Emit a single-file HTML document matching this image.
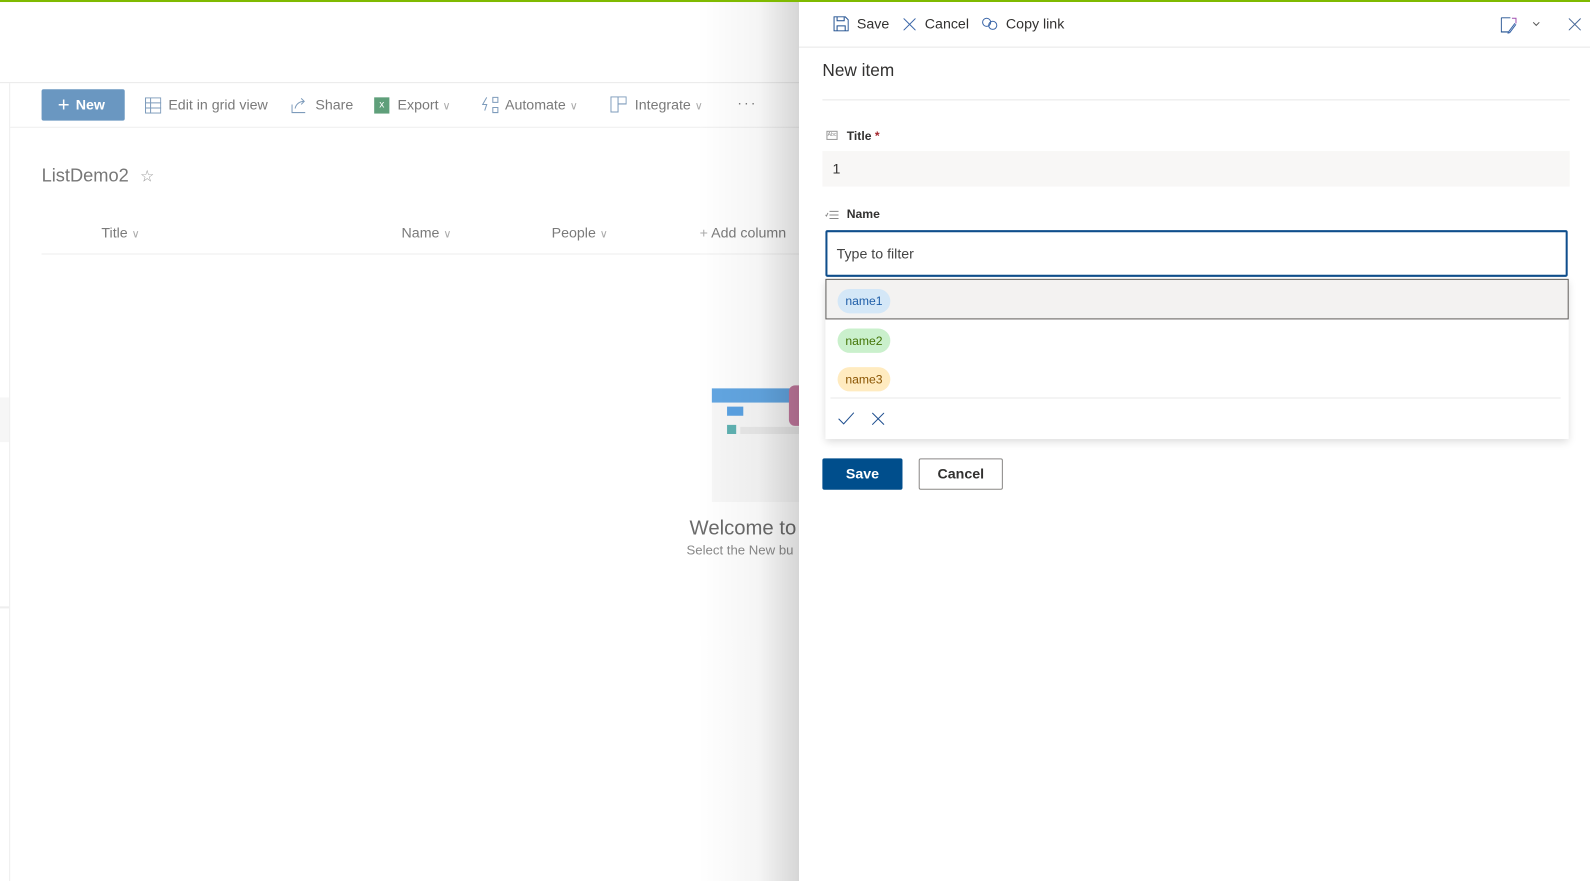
<!DOCTYPE html>
<html><head><meta charset="utf-8"><style>
*{box-sizing:border-box;margin:0;padding:0}
html,body{width:1590px;height:869px;overflow:hidden;background:#fff}
#w{position:absolute;left:0;top:0;width:1568px;height:857px;transform:scale(1.01403);transform-origin:0 0;font-family:"Segoe UI","Liberation Sans",sans-serif;color:#323130}
.a{position:absolute}
.g{color:#7a7a7a;font-size:14px;margin-top:1px}
.t{margin-top:0}
</style></head><body><div id="w">
<div class="a" style="left:0;top:0;width:1568px;height:2px;background:#7fba00"></div>
<div class="a" style="left:0;top:81px;width:788px;height:1px;background:#eaeaea"></div>
<div class="a" style="left:9px;top:82px;width:1px;height:787px;background:#eee"></div>
<div class="a" style="left:0;top:392px;width:9px;height:44px;background:#f6f6f6"></div>
<div class="a" style="left:0;top:598px;width:9px;height:2px;background:#eee"></div>
<div class="a" style="left:10px;top:125px;width:778px;height:1px;background:#eee"></div>
<div class="a" style="left:41px;top:88px;width:82px;height:31px;background:#6a97c1;border-radius:2px;color:#fff;font-size:14px;font-weight:600;line-height:31px;padding-left:16px"><span style="font-size:20px;font-weight:300;vertical-align:-2px;margin-right:6px">+</span>New</div>
<svg class="a" style="left:143px;top:96px" width="16" height="16" fill="none" stroke="#7d9bbb"><rect x="0.5" y="0.5" width="15" height="15"/><path d="M0 5.5h16M0 10.5h16M5.5 0v16"/></svg>
<div class="a g" style="left:166px;top:94px">Edit in grid view</div>
<svg class="a" style="left:287px;top:96px" width="16" height="16" fill="none" stroke="#7d9bbb"><path d="M1 7v8h13M4 11c1-5 5-7 9-7M10 1l3 3-3 3"/></svg>
<div class="a g" style="left:311px;top:94px">Share</div>
<div class="a" style="left:369px;top:96px;width:15px;height:16px;background:#5f9f7a;color:#fff;font-size:10px;text-align:center;line-height:16px">x</div>
<div class="a g" style="left:392px;top:94px">Export <span style="font-size:11px;color:#aaa">&#8744;</span></div>
<svg class="a" style="left:475px;top:95px" width="17" height="17" fill="none" stroke="#7d9bbb"><path d="M5 1L1 8h4l-2 6M11 1h5v5h-5zM11 11h5v5h-5z"/></svg>
<div class="a g" style="left:498px;top:94px">Automate <span style="font-size:11px;color:#aaa">&#8744;</span></div>
<svg class="a" style="left:602px;top:95px" width="16" height="16" fill="none" stroke="#7d9bbb"><path d="M.5 .5h15v7h-8v8h-7zM7.5 .5v7"/></svg>
<div class="a g" style="left:626px;top:94px">Integrate <span style="font-size:11px;color:#aaa">&#8744;</span></div>
<div class="a g" style="left:727px;top:92px;letter-spacing:2px">···</div>
<div class="a t" style="left:41px;top:163px;font-size:18px;color:#777">ListDemo2 <span style="font-size:16px;margin-left:6px;color:#999">&#9734;</span></div>
<div class="a g" style="left:100px;top:220px">Title <span style="font-size:11px;color:#aaa">&#8744;</span></div>
<div class="a g" style="left:396px;top:220px">Name <span style="font-size:11px;color:#aaa">&#8744;</span></div>
<div class="a g" style="left:544px;top:220px">People <span style="font-size:11px;color:#aaa">&#8744;</span></div>
<div class="a g" style="left:690px;top:220px"><span style="color:#aaa">+</span> Add column</div>
<div class="a" style="left:41px;top:250px;width:747px;height:1px;background:#eee"></div>
<div class="a" style="left:702px;top:387px;width:86px;height:108px;background:#f7f7f7"></div>
<div class="a" style="left:702px;top:383px;width:86px;height:14px;background:#62a6e2"></div>
<div class="a" style="left:717px;top:401px;width:16px;height:9px;background:#5aa2e3"></div>
<div class="a" style="left:717px;top:419px;width:9px;height:9px;background:#5fb2b2"></div>
<div class="a" style="left:730px;top:421px;width:58px;height:7px;background:#e9e9e9"></div>
<div class="a" style="left:778px;top:380px;width:10px;height:40px;background:#c57aa0;border-radius:6px 0 0 6px"></div>
<div class="a t" style="left:680px;top:510px;font-size:20px;color:#6b6b6b">Welcome to</div>
<div class="a t" style="left:677px;top:535px;font-size:13px;color:#8a8a8a">Select the New bu</div>
<div class="a" style="left:688px;top:2px;width:100px;height:867px;background:linear-gradient(90deg,rgba(0,0,0,0),rgba(0,0,0,.04) 60%,rgba(0,0,0,.16))"></div>
<div class="a" style="left:788px;top:2px;width:802px;height:867px;background:#fff">
<svg class="a" style="left:34px;top:14px" width="15" height="15" fill="none" stroke="#1f4f8f"><path d="M.5 .5h11l3 3v11H.5zM3.5 .5v4h7v-4M3.5 14.5v-5h8v5"/></svg>
<div class="a t" style="left:57px;top:13px;font-size:14px">Save</div>
<svg class="a" style="left:103px;top:16px" width="12" height="12" stroke="#3b66a8"><path d="M0 0L12 12M12 0L0 12"/></svg>
<div class="a t" style="left:124px;top:13px;font-size:14px">Cancel</div>
<svg class="a" style="left:180px;top:15px" width="17" height="13" fill="none" stroke="#3b66a8"><circle cx="5" cy="5" r="4"/><circle cx="11" cy="8" r="4"/></svg>
<div class="a t" style="left:204px;top:13px;font-size:14px">Copy link</div>
<svg class="a" style="left:692px;top:15px" width="16" height="16" fill="none" stroke="#1f4f8f"><path d="M.5 .5h9M.5 .5v14h7"/><path d="M11 1h4v5" stroke="#a04fb0"/><path d="M14 6l-6 8-1 2 2-1 6-8" stroke="#3b66a8"/></svg>
<svg class="a" style="left:723px;top:19px" width="8" height="6" fill="none" stroke="#555"><path d="M1 1l3 3 3-3"/></svg>
<svg class="a" style="left:759px;top:16px" width="12" height="12" stroke="#4a6a9a"><path d="M0 0L12 12M12 0L0 12"/></svg>
<div class="a" style="left:0;top:44px;width:802px;height:1px;background:#e8e8e8"></div>
<div class="a t" style="left:23px;top:58px;font-size:17px">New item</div>
<div class="a" style="left:23px;top:96px;width:737px;height:1px;background:#e8e8e8"></div>
<div class="a" style="left:27px;top:127px;width:11px;height:9px;border:1px solid #999;font-size:5px;color:#888;line-height:7px;text-align:center">Abc</div>
<div class="a t" style="left:47px;top:125px;font-size:12px;font-weight:600">Title <span style="color:#a4262c">*</span></div>
<div class="a" style="left:23px;top:147px;width:737px;height:35px;background:#f8f7f6;font-size:14px;line-height:35px;padding-left:10px">1</div>
<svg class="a" style="left:26px;top:205px" width="13" height="10" fill="none" stroke="#888"><path d="M4 1.5h9M4 5h9M4 8.5h9M0 5l1 1 1.5-3"/></svg>
<div class="a t" style="left:47px;top:202px;font-size:12px;font-weight:600">Name</div>
<div class="a" style="left:26px;top:225px;width:732px;height:46px;border:2px solid #0f4e8c;border-radius:2px;font-size:14px;line-height:42px;padding-left:9px;color:#444">Type to filter</div>
<div class="a" style="left:26px;top:273px;width:733px;height:158px;background:#fff;box-shadow:0 3px 8px rgba(0,0,0,.15)">
<div class="a" style="left:0;top:0;width:733px;height:40px;background:#f3f2f1;border:1px solid #605e5c"></div>
<div class="a" style="left:12px;top:10px;width:52px;height:24px;border-radius:12px;background:#d4e7f7;color:#1f5ea8;font-size:12px;line-height:24px;text-align:center">name1</div>
<div class="a" style="left:12px;top:49px;width:52px;height:24px;border-radius:12px;background:#caf0cc;color:#437406;font-size:12px;line-height:24px;text-align:center">name2</div>
<div class="a" style="left:12px;top:87px;width:52px;height:24px;border-radius:12px;background:#ffebc0;color:#8a5400;font-size:12px;line-height:24px;text-align:center">name3</div>
<div class="a" style="left:5px;top:117px;width:720px;height:1px;background:#e8e8e8"></div>
<svg class="a" style="left:12px;top:131px" width="17" height="13" fill="none" stroke="#1f4f8f"><path d="M1 7l5 5L16 1"/></svg>
<svg class="a" style="left:46px;top:132px" width="12" height="12" stroke="#1f4f8f"><path d="M0 0L12 12M12 0L0 12"/></svg>
</div>
<div class="a" style="left:23px;top:450px;width:79px;height:31px;background:#004e8c;border-radius:2px;color:#fff;font-size:14px;font-weight:600;text-align:center;line-height:31px">Save</div>
<div class="a" style="left:118px;top:450px;width:83px;height:31px;border:1px solid #8a8886;border-radius:2px;font-size:14px;font-weight:600;text-align:center;line-height:29px">Cancel</div>
</div>
</div></body></html>
